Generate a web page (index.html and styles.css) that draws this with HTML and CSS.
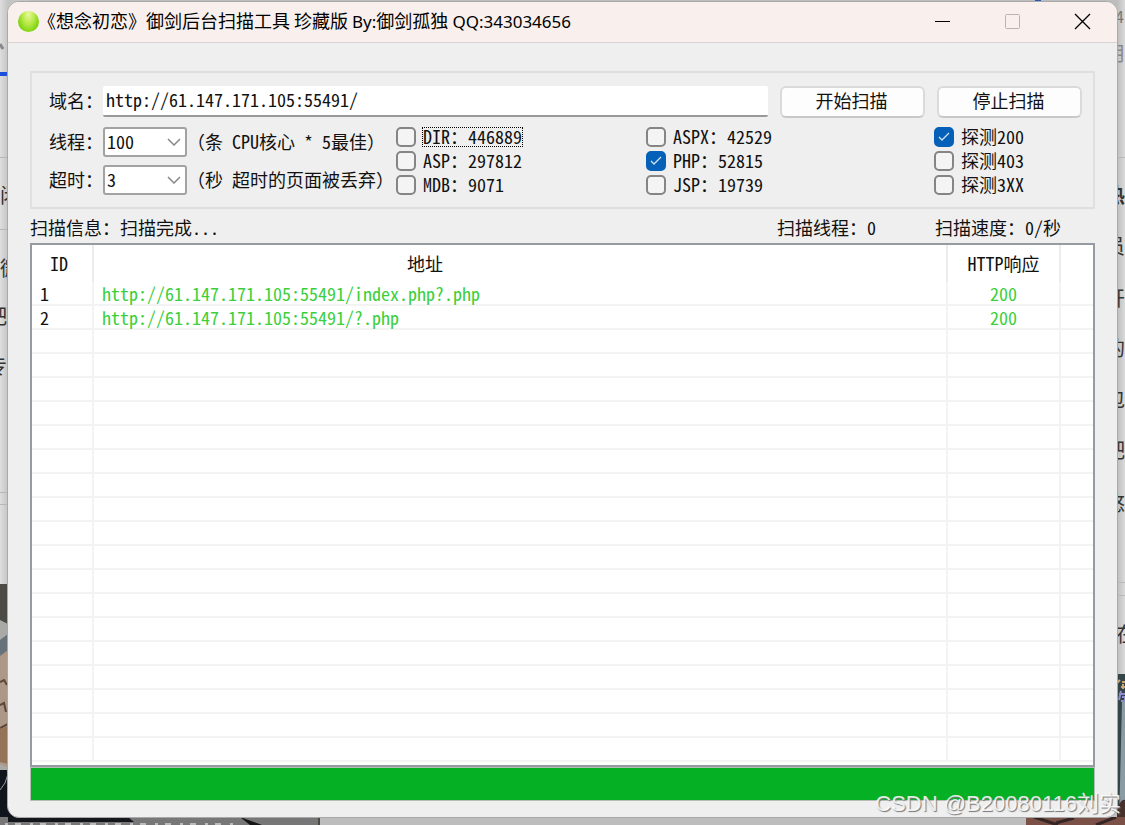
FILE: index.html
```html
<!DOCTYPE html>
<html lang="zh-CN">
<head>
<meta charset="utf-8">
<title>御剑后台扫描工具</title>
<link rel="stylesheet" href="styles.css">
</head>
<body>
<div class="backdrop" aria-hidden="true">
  <div class="strip strip-left">
    <svg class="caret" width="8" height="10" viewBox="0 0 8 10"><path d="M0 2 3 7" stroke="#888" stroke-width="3" fill="none"/></svg>
    <i class="accent"></i>
    <i class="rule r157"></i><i class="rule r229"></i><i class="rule r492"></i><i class="rule r504"></i>
    <span class="t183">闭</span><span class="t256">微</span><span class="t304">吧</span><span class="t354">专</span>
    <svg class="photo-left" width="320" height="241" viewBox="0 0 320 241">
      <rect width="320" height="241" fill="#4c4a45"/>
      <path d="M0 36 8 40V241H0z" fill="#a9aaa8"/>
      <path d="M0 56 8 50V70L0 72z" fill="#66717a"/>
      <path d="M0 72 8 66V184L0 180z" fill="#ad9888"/>
      <path d="M0 98 4 96 7 101M0 121 4 119 6 128M0 144 8 140" stroke="#5c4539" stroke-width="2" fill="none"/>
      <path d="M0 145 8 142V180L0 178z" fill="#957357"/>
      <path d="M0 186H10L14 233 0 241z" fill="#10151d"/>
      <path d="M0 206Q6 200 8 190" stroke="#8d9aa5" stroke-width="1" fill="none"/>
      <path d="M0 233H318V241H0z" fill="#777"/>
      <path d="M8 233H128L134 238H8z" fill="#14171c"/>
      <path d="M240 233 262 241H250z" fill="#151515"/>
      <path d="M5 240H240" stroke="#bbb" stroke-width="2" stroke-dasharray="3 7 6 9"/>
    </svg>
  </div>
  <div class="strip strip-right">
    <i class="rule r157"></i><i class="rule r582"></i><i class="rule r595"></i>
    <span class="right-four">4</span><span class="t41 grey">用一</span><b class="t183">热</b><span class="t234">员手</span><span class="t286">开尸</span><span class="t336">的物</span><span class="t387">包一</span><span class="t438">吧四</span><span class="t491">悠尽</span><span class="t622 near">在</span>
    <svg class="photo-right" width="8" height="151" viewBox="0 0 8 151">
      <rect width="8" height="151" fill="#344548"/>
      <path d="M5 28H8V151H2z" fill="#8a9ba3"/>
      <path d="M0 9 3 6M5 8H8M6 10V15M4 13H8" stroke="#c6a977" stroke-width="2"/>
      <path d="M2 20H8M4 17 2 26M5 23H8V27H4" stroke="#8e8bcc" stroke-width="2" fill="none"/>
      <path d="M0 134Q5 124 8 126V151H0z" fill="#47312d"/>
    </svg>
  </div>
  <svg class="photo-bottom" width="99" height="8" viewBox="0 0 99 8"><rect width="99" height="8" fill="#7b5147"/><path d="M8 0 32 8M48 1 30 6M70 8 90 0" stroke="#352525" stroke-width="3"/></svg>
  <i class="blue-mark"></i>
</div>

<main class="window">
  <header class="titlebar">
    <span class="orb"></span>
    <h1>《想念初恋》御剑后台扫描工具 珍藏版 <span class="tl">By:</span>御剑孤独 <span class="tl">QQ:343034656</span></h1>
    <button class="winbtn" aria-label="最小化"><svg width="17" height="17" viewBox="0 0 17 17"><path d="M1 8.5H16" stroke="#000"/></svg></button>
    <button class="winbtn" aria-label="最大化" disabled><svg width="17" height="17" viewBox="0 0 17 17"><rect x="1.500" y="1.500" width="14" height="14" rx="1" fill="none" stroke="#b9b3b1"/></svg></button>
    <button class="winbtn" aria-label="关闭"><svg width="17" height="17" viewBox="0 0 17 17"><path d="M1 1 16 16M16 1 1 16" stroke="#000" stroke-width="1.300"/></svg></button>
  </header>

  <div class="content">
    <form class="group" onsubmit="return false">
      <div class="url-row">
        <label class="cap" for="url">域名：</label>
        <input class="url" id="url" type="text" value="http://61.147.171.105:55491/">
        <button class="push" type="button">开始扫描</button>
        <button class="push" type="button">停止扫描</button>
      </div>
      <div class="options">
        <div class="combos">
          <div class="combo"><label class="cap" for="threads">线程：</label><select id="threads"><option>100</option></select><span>（条 CPU核心 * 5最佳）</span></div>
          <div class="combo"><label class="cap" for="timeout">超时：</label><select id="timeout"><option>3</option></select><span>（秒 超时的页面被丢弃）</span></div>
        </div>
        <div class="checks">
          <label><input type="checkbox"><span class="focus">DIR：446889</span></label>
          <label><input type="checkbox"><span>ASP：297812</span></label>
          <label><input type="checkbox"><span>MDB：9071</span></label>
        </div>
        <div class="checks">
          <label><input type="checkbox"><span>ASPX：42529</span></label>
          <label><input type="checkbox" checked><span>PHP：52815</span></label>
          <label><input type="checkbox"><span>JSP：19739</span></label>
        </div>
        <div class="checks">
          <label><input type="checkbox" checked><span>探测200</span></label>
          <label><input type="checkbox"><span>探测403</span></label>
          <label><input type="checkbox"><span>探测3XX</span></label>
        </div>
      </div>
    </form>

    <div class="status">
      <span>扫描信息：扫描完成...</span>
      <span>扫描线程：0</span>
      <span>扫描速度：0/秒</span>
    </div>

    <div class="list">
      <table>
        <colgroup><col class="c-id"><col><col class="c-http"><col class="c-end"></colgroup>
        <thead><tr><th class="id">ID</th><th class="addr">地址</th><th>HTTP响应</th><th></th></tr></thead>
        <tbody>
          <tr><td>1</td><td class="hit">http://61.147.171.105:55491/index.php?.php</td><td class="hit code">200</td><td></td></tr>
          <tr><td>2</td><td class="hit">http://61.147.171.105:55491/?.php</td><td class="hit code">200</td><td></td></tr>
          <tr><td></td><td></td><td></td><td></td></tr>
          <tr><td></td><td></td><td></td><td></td></tr>
          <tr><td></td><td></td><td></td><td></td></tr>
          <tr><td></td><td></td><td></td><td></td></tr>
          <tr><td></td><td></td><td></td><td></td></tr>
          <tr><td></td><td></td><td></td><td></td></tr>
          <tr><td></td><td></td><td></td><td></td></tr>
          <tr><td></td><td></td><td></td><td></td></tr>
          <tr><td></td><td></td><td></td><td></td></tr>
          <tr><td></td><td></td><td></td><td></td></tr>
          <tr><td></td><td></td><td></td><td></td></tr>
          <tr><td></td><td></td><td></td><td></td></tr>
          <tr><td></td><td></td><td></td><td></td></tr>
          <tr><td></td><td></td><td></td><td></td></tr>
          <tr><td></td><td></td><td></td><td></td></tr>
          <tr><td></td><td></td><td></td><td></td></tr>
          <tr><td></td><td></td><td></td><td></td></tr>
          <tr><td></td><td></td><td></td><td></td></tr>
        </tbody>
      </table>
    </div>
    <progress value="100" max="100" aria-label="扫描进度"></progress>
  </div>
</main>
<div class="watermark">CSDN @B20080116刘实</div>
</body>
</html>
```

FILE: styles.css
```css
* { box-sizing: border-box; }

body {
  margin: 0;
  min-height: 100vh;
  padding: 1px 7px 7px;
  display: flex;
  position: relative;
  overflow: hidden;
  background: #bdbdbd;
  color: #111;
  font: 18px/24px "Noto Sans CJK SC", sans-serif;
}

/* Desktop behind the window */
.backdrop { position: absolute; inset: 0; overflow: hidden; color: #333; font-size: 20px; }
.strip { position: absolute; top: 0; bottom: 0; }
.strip-left { left: 0; width: 30px; background: linear-gradient(90deg, #dedede, #c4c4c4 8px); }
.strip-right { right: 0; width: 30px; background: linear-gradient(270deg, #dadada, #bdbdbd 8px); }
.strip span, .strip b { position: absolute; white-space: nowrap; }
.strip-left span { left: 0; }
.strip-left .t304, .strip-left .t354 { left: -13px; }
.strip-right span, .strip-right b { left: 10px; }
.strip-right .near { left: 21px; }
.strip .right-four { top: 4px; left: 20px; color: #777; font-size: 16px; }
.strip .grey { color: #888; }
.t41 { top: 41px; }
.t183 { top: 183px; }
.t234 { top: 234px; }
.t256 { top: 256px; }
.t286 { top: 286px; }
.t304 { top: 304px; }
.t336 { top: 336px; }
.t354 { top: 354px; }
.t387 { top: 387px; }
.t438 { top: 438px; }
.t491 { top: 491px; }
.t622 { top: 622px; }
.caret { position: absolute; top: 42px; left: 0; }
.accent { position: absolute; top: 72px; width: 8px; height: 4px; background: #1a50dc; }
.rule { position: absolute; width: 100%; height: 1px; background: #b8b8bb; }
.r157 { top: 157px; }
.r229 { top: 229px; }
.r492 { top: 492px; }
.r504 { top: 504px; }
.r582 { top: 582px; }
.r595 { top: 595px; }
.photo-left { position: absolute; top: 584px; left: 0; }
.photo-right { position: absolute; top: 674px; right: 0; }
.photo-bottom { position: absolute; right: 0; bottom: 0; }
.blue-mark { position: absolute; top: 0; right: 84px; width: 6px; height: 2px; background: #2e56b8; }

/* Window frame */
.window {
  position: relative;
  flex: 1;
  display: flex;
  flex-direction: column;
  border: 1px solid #a9a9a9;
  border-radius: 12px;
  overflow: hidden;
  background: #efefef;
}
.titlebar {
  display: flex;
  align-items: center;
  height: 41px;
  padding: 0 0 2px 10px;
  border-bottom: 1px solid #d9d4d3;
  background: #f9f0ed;
}
.titlebar h1 { flex: 1; margin: 0; padding-bottom: 2px; font-size: 18px; line-height: 24px; font-weight: 400; color: #000; white-space: nowrap; }
.tl { font-family: "Noto Sans", sans-serif; font-size: 17px; line-height: 20px; }
.orb {
  width: 21px;
  height: 21px;
  border-radius: 50%;
  margin-right: -1px;
  background: radial-gradient(ellipse at 50% 15%, #e9f99a 0, #b8e94a 40%, #7cd30c 75%, #78c420 100%);
}
.winbtn { width: 70px; height: 38px; padding: 0; border: 0; background: none; }
.winbtn svg { display: block; margin: auto; }

.content {
  flex: 1;
  display: flex;
  flex-direction: column;
  padding: 28px 22px 16px;
  font-family: "Noto Sans Mono CJK SC", "Noto Sans CJK SC", monospace;
}

/* Options group */
.group {
  padding: 12px 11px 10px 17px;
  border: 2px solid #dfdfdf;
}
.url-row { display: flex; align-items: center; height: 33px; }
.cap { flex: none; width: 54px; padding-bottom: 3px; white-space: nowrap; }
.url {
  flex: 1;
  min-width: 0;
  height: 31px;
  padding: 0 3px 4px;
  border: 0;
  border-bottom: 2px solid #999;
  border-radius: 2px;
  background: #fff;
  color: #111;
  font: inherit;
  outline: 0;
}
.push {
  width: 145px;
  height: 32px;
  margin-left: 12px;
  padding: 0 2px 3px 0;
  border: 2px solid #dadada;
  border-bottom-color: #c8c8c8;
  border-radius: 6px;
  background: #fdfdfd;
  color: #111;
  font: inherit;
}
.options { display: grid; grid-template-columns: 347px 250px 1fr 148px; padding-top: 7px; }
.combos { display: flex; flex-direction: column; gap: 8px; padding-top: 2px; }
.combo { display: flex; align-items: center; height: 30px; white-space: nowrap; }
.combo span { padding-bottom: 3px; }
select {
  appearance: none;
  flex: none;
  width: 84px;
  height: 30px;
  padding: 0 2px 3px;
  border: 2px solid #a2a2a2;
  border-radius: 3px;
  color: #111;
  font: inherit;
  background: #fff url("data:image/svg+xml,%3Csvg xmlns='http://www.w3.org/2000/svg' width='14' height='8'%3E%3Cpath d='M1 1l6 6 6-6' fill='none' stroke='%23888' stroke-width='1.500'/%3E%3C/svg%3E") no-repeat right 4px center;
}
.checks label { display: flex; align-items: center; gap: 7px; height: 24px; white-space: nowrap; }
.checks span { padding-bottom: 2px; }
.checks input {
  appearance: none;
  flex: none;
  width: 20px;
  height: 20px;
  margin: 0;
  border: 2px solid #858585;
  border-radius: 5px;
  background: #f4f4f4;
}
.checks input:checked {
  border-color: #0560b8;
  background: #0560b8 url("data:image/svg+xml,%3Csvg xmlns='http://www.w3.org/2000/svg' width='12' height='10'%3E%3Cpath d='M1 5l3 3 7-7' fill='none' stroke='%23cfe2f4' stroke-width='1.300'/%3E%3C/svg%3E") no-repeat center;
}
.checks .focus { height: 18px; padding: 0; line-height: 17px; outline: 1px dotted #000; }

.status { display: grid; grid-template-columns: 1fr 158px 160px; padding: 6px 0 4px; white-space: nowrap; }

/* Result list */
.list { flex: 1; border: 2px solid #969ba2; background: #fff; overflow: hidden; }
table { width: 100%; table-layout: fixed; border-collapse: separate; border-spacing: 0; }
.c-id { width: 62px; }
.c-http { width: 113px; }
.c-end { width: 32px; }
th { height: 37px; padding: 0 0 2px; font-weight: 400; border-right: 2px solid #ececec; }
th.id { padding-right: 6px; }
th.addr { padding-right: 190px; }
td { height: 24px; padding: 0 8px; line-height: 22px; border-right: 2px solid #f3f3f3; border-bottom: 2px solid #f3f3f3; white-space: nowrap; }
th:last-child, td:last-child { border-right: 0; }
.hit { color: #3ccf3c; }
.code { padding: 0; text-align: center; }

progress { appearance: none; display: block; width: 100%; height: 34px; border: 1px solid #b5bdb5; }
progress::-webkit-progress-bar { background: #e6e6e6; }
progress::-webkit-progress-value { background: #06b025; }

.watermark {
  position: absolute;
  right: 4px;
  bottom: 7px;
  color: rgba(255, 255, 255, 0.85);
  font-family: "Liberation Sans", "Noto Sans CJK SC", sans-serif;
  font-size: 22px;
  line-height: 28px;
  text-shadow: 1px 1px 1px #777;
  white-space: nowrap;
}
```
